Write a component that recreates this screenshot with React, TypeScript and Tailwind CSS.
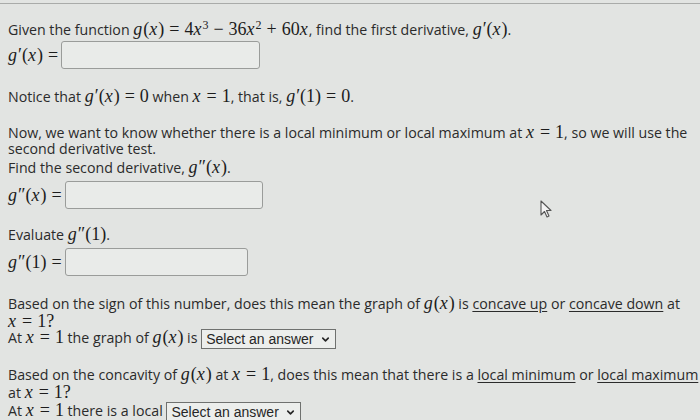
import { ChevronDown } from 'lucide-react';
import type { ReactNode } from 'react';

const sans = "font-['Open_Sans',sans-serif]";
const serif = "font-['Liberation_Serif',serif]";

function M({ children }: { children: ReactNode }) {
	return <span className={`${serif} text-[18px] leading-none text-[#1c1c1c]`}>{children}</span>;
}

function V({ children }: { children: ReactNode }) {
	return <i className="pr-[1px]">{children}</i>;
}

function Op({ children }: { children: ReactNode }) {
	return <span className="mx-[5px] not-italic">{children}</span>;
}

function AnswerBox({ width }: { width: string }) {
	return <span className={`ml-[3px] inline-block h-[28px] ${width} rounded-[3px] border border-[#9a9c9a] bg-[#e9ebe9] align-middle`} />;
}

function SelectBox() {
	return (
		<span className="-my-[4px] inline-flex h-[20px] items-center gap-[6px] border border-[#6f716f] bg-[#eceeec] px-[4px] align-middle font-['Liberation_Sans',sans-serif] text-[14px] leading-none text-[#262626]">
			Select an answer
			<ChevronDown size={11} strokeWidth={3.5} />
		</span>
	);
}

export default function App() {
	return (
		<div className={`relative h-[420px] w-[700px] overflow-hidden bg-[#e2e4e2] ${sans} text-[14.2px] text-[#2b2b2b]`}>
			<div className="mt-[3px] h-px w-full bg-[#a9aba9]" />
			<div className="pl-[8px] pr-[1px]">
				<p className="mt-[16px] leading-[20px]">
					Given the function <M><V>g</V>(<V>x</V>)<Op>=</Op>4<V>x</V><sup className="text-[12px]">3</sup><Op>−</Op>36<V>x</V><sup className="text-[12px]">2</sup><Op>+</Op>60<V>x</V></M>, find the first derivative, <M><V>g</V>′(<V>x</V>)</M>.
				</p>
				<div className="mt-[1px] flex items-center">
					<M><V>g</V>′(<V>x</V>)<span className="ml-[5px]">=</span></M>
					<AnswerBox width="w-[199px]" />
				</div>

				<p className="mt-[18px] leading-[20px]">
					Notice that <M><V>g</V>′(<V>x</V>)<Op>=</Op>0</M> when <M><V>x</V><Op>=</Op>1</M>, that is, <M><V>g</V>′(1)<Op>=</Op>0</M>.
				</p>

				<p className="mt-[16px] pr-[7px] leading-[16px]">
					Now, we want to know whether there is a local minimum or local maximum at <M><V>x</V><Op>=</Op>1</M>, so we will use the second derivative test.
				</p>
				<p className="mt-[1px] leading-[20px]">
					Find the second derivative, <M><V>g</V>″(<V>x</V>)</M>.
				</p>
				<div className="mt-[3px] flex items-center">
					<M><V>g</V>″(<V>x</V>)<span className="ml-[5px]">=</span></M>
					<AnswerBox width="w-[198px]" />
				</div>

				<p className="mt-[16px] leading-[20px]">
					Evaluate <M><V>g</V>″(1)</M>.
				</p>
				<div className="mt-[3px] flex items-center">
					<M><V>g</V>″(1)<span className="ml-[5px]">=</span></M>
					<AnswerBox width="w-[183px]" />
				</div>

				<p className="mt-[18px] pr-[7px] leading-[17px]">
					Based on the sign of this number, does this mean the graph of <M><V>g</V>(<V>x</V>)</M> is <span className="underline underline-offset-2">concave up</span> or <span className="underline underline-offset-2">concave down</span> at <M><V>x</V><Op>=</Op>1?</M>
				</p>
				<p className="-mt-[2px] leading-[17px]">
					At <M><V>x</V><Op>=</Op>1</M> the graph of <M><V>g</V>(<V>x</V>)</M> is <SelectBox />
				</p>

				<p className="mt-[19px] leading-[17px]">
					Based on the concavity of <M><V>g</V>(<V>x</V>)</M> at <M><V>x</V><Op>=</Op>1</M>, does this mean that there is a <span className="underline underline-offset-2">local minimum</span> or <span className="underline underline-offset-2">local maximum</span> at <M><V>x</V><Op>=</Op>1?</M>
				</p>
				<p className="leading-[17px]">
					At <M><V>x</V><Op>=</Op>1</M> there is a local <SelectBox />
				</p>
			</div>

			<svg className="absolute left-[540px] top-[200px]" width="14" height="20" viewBox="0 0 14 20">
				<path d="M1 1 L1 15 L4.5 11.5 L7 17 L9 16 L6.5 10.5 L11 10.5 Z" fill="#f4f4f4" stroke="#555" strokeWidth="1.1" strokeLinejoin="round" />
			</svg>
		</div>
	);
}
